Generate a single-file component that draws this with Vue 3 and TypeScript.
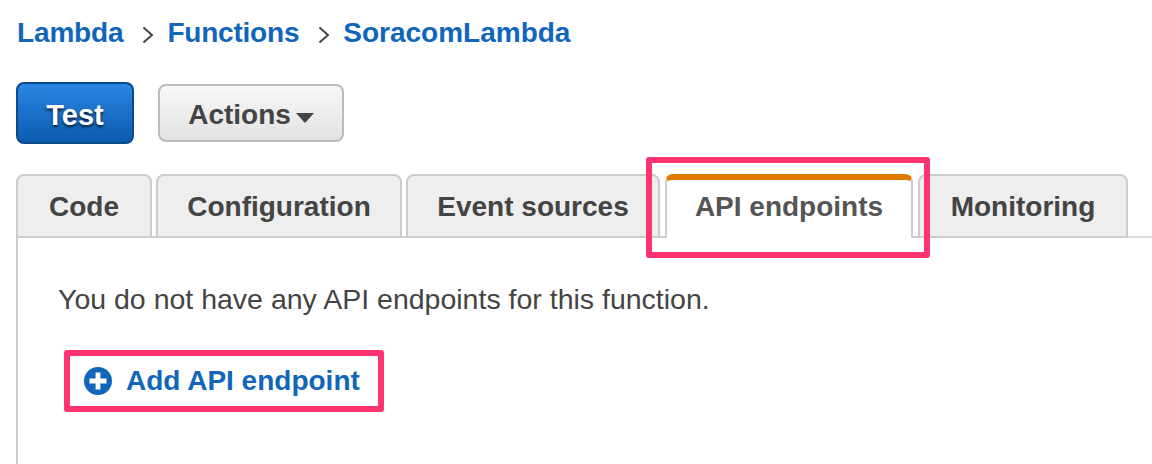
<script setup lang="ts">
const crumbs: string[] = ['Lambda', 'Functions', 'SoracomLambda']
const tabs: { label: string; width: number; active?: boolean }[] = [
  { label: 'Code', width: 136 },
  { label: 'Configuration', width: 246 },
  { label: 'Event sources', width: 254 },
  { label: 'API endpoints', width: 248, active: true },
  { label: 'Monitoring', width: 210 },
]
</script>

<template>
  <div class="page">
    <nav class="crumbs">
      <template v-for="(c, i) in crumbs" :key="c">
        <svg v-if="i > 0" class="sep" width="12" height="18" viewBox="0 0 12 18">
          <path d="M1.5 1.5 L10 9 L1.5 16.5" fill="none" stroke="#444" stroke-width="2" />
        </svg>
        <a class="crumb">{{ c }}</a>
      </template>
    </nav>
    <div class="actions">
      <button class="btn primary"><span class="lift">Test</span></button>
      <button class="btn secondary"><span class="lift">Actions</span><span class="caret"></span></button>
    </div>
    <div class="tabs">
      <div
        v-for="t in tabs"
        :key="t.label"
        class="tab"
        :class="{ active: t.active }"
        :style="{ width: t.width + 'px' }"
      >{{ t.label }}</div>
      <div class="tab-rest"></div>
      <div class="mark mark-tab"></div>
    </div>
    <section class="panel">
      <p class="msg">You do not have any API endpoints for this function.</p>
      <div class="add-wrap">
        <a class="add">
          <svg width="28" height="28" viewBox="0 0 28 28">
            <circle cx="14" cy="14" r="14" fill="#1166bb" />
            <path d="M14 5.5 V22.5 M5.5 14 H22.5" stroke="#fff" stroke-width="4.8" />
          </svg>
          <span>Add API endpoint</span>
        </a>
        <div class="mark mark-add"></div>
      </div>
    </section>
  </div>
</template>

<style>
html, body { margin: 0; background: #fff; }
</style>

<style scoped>
.page {
  width: 1152px;
  height: 464px;
  overflow: hidden;
  background: #fff;
  font-family: "Liberation Sans", Arial, sans-serif;
  box-sizing: border-box;
  padding-left: 17px;
}
.crumbs {
  display: flex;
  align-items: center;
  height: 30px;
  margin-top: 18px;
}
.crumb {
  font-size: 28px;
  font-weight: 700;
  color: #1166bb;
  line-height: 30px;
}
.crumb:nth-of-type(1) { letter-spacing: -0.15px; }
.crumb:nth-of-type(2) { letter-spacing: -0.22px; }
.sep { margin: 4px 13px 0 19px; }
.actions {
  display: flex;
  align-items: center;
  gap: 24px;
  margin-top: 34px;
  margin-left: -1px;
}
.btn {
  font-family: inherit;
  font-size: 28px;
  font-weight: 700;
  padding: 0;
  box-sizing: border-box;
  display: flex;
  align-items: center;
  justify-content: center;
}
.lift { position: relative; top: 2px; }
.primary {
  width: 118px;
  height: 62px;
  font-size: 29px;
  color: #fff;
  background: linear-gradient(#2a86e4, #0c5bae);
  border: 2px solid #0a4a8c;
  border-radius: 8px;
  text-shadow: 0 2px 3px rgba(0, 0, 0, 0.75);
}
.secondary {
  width: 186px;
  height: 58px;
  color: #444;
  background: linear-gradient(#f8f8f8, #e2e2e2);
  border: 2px solid #bbb;
  border-radius: 8px;
}
.caret {
  display: inline-block;
  width: 0;
  height: 0;
  margin: 10px 0 0 5px;
  border-left: 9px solid transparent;
  border-right: 9px solid transparent;
  border-top: 10px solid #444;
}
.tabs {
  position: relative;
  display: flex;
  gap: 4px;
  margin-top: 30px;
  margin-left: -1px;
  height: 64px;
}
.tabs::before {
  content: "";
  position: absolute;
  left: 0;
  bottom: 0;
  width: 1112px;
  height: 2px;
  background: #ccc;
}
.tab {
  position: relative;
  box-sizing: border-box;
  height: 64px;
  flex: none;
  text-align: center;
  font-size: 28px;
  font-weight: 700;
  line-height: 62px;
  color: #444;
  background: #eee;
  border: 2px solid #ccc;
  border-radius: 8px 8px 0 0;
}
.tab.active {
  z-index: 1;
  margin: 0 1px 0 1px;
  color: #555;
  background: #fff;
  border-top: 6px solid #e07a00;
  border-bottom: none;
  line-height: 54px;
}
.tab-rest {
  flex: 1;
  margin-left: -4px;
  border-bottom: 2px solid #ddd;
}
.panel {
  box-sizing: border-box;
  height: 227px;
  margin-left: -1px;
  border-left: 2px solid #ccc;
  padding: 46px 0 0 40px;
}
.msg {
  margin: 0;
  font-size: 28.5px;
  line-height: 30px;
  color: #444;
}
.add-wrap {
  position: relative;
  margin-top: 51px;
  padding-left: 26px;
}
.add {
  display: flex;
  align-items: center;
  gap: 14px;
  font-size: 28px;
  font-weight: 700;
  line-height: 32px;
  color: #1166bb;
}
.mark {
  position: absolute;
  box-sizing: border-box;
  border: 6px solid #ff3370;
  border-radius: 3px;
  z-index: 2;
}
.mark-tab {
  left: 630px;
  top: -17px;
  width: 284px;
  height: 101px;
}
.mark-add {
  left: 6px;
  top: -15px;
  width: 320px;
  height: 62px;
}
</style>
